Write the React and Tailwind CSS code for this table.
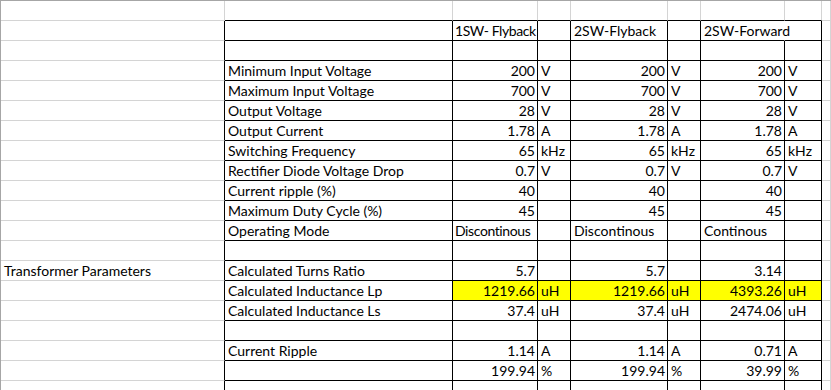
const rows = [
  { top: true },
  { head: ['1SW- Flyback', '2SW-Flyback', '2SW-Forward'], title: true },
  {},
  { b: 'Minimum Input Voltage', v: [['200', 'V'], ['200', 'V'], ['200', 'V']] },
  { b: 'Maximum Input Voltage', v: [['700', 'V'], ['700', 'V'], ['700', 'V']] },
  { b: 'Output Voltage', v: [['28', 'V'], ['28', 'V'], ['28', 'V']] },
  { b: 'Output Current', v: [['1.78', 'A'], ['1.78', 'A'], ['1.78', 'A']] },
  { b: 'Switching Frequency', v: [['65', 'kHz'], ['65', 'kHz'], ['65', 'kHz']] },
  { b: 'Rectifier Diode Voltage Drop', v: [['0.7', 'V'], ['0.7', 'V'], ['0.7', 'V']] },
  { b: 'Current ripple (%)', v: [['40', ''], ['40', ''], ['40', '']] },
  { b: 'Maximum Duty Cycle (%)', v: [['45', ''], ['45', ''], ['45', '']] },
  { b: 'Operating Mode', head: ['Discontinous', 'Discontinous', 'Continous'] },
  {},
  { a: 'Transformer Parameters', b: 'Calculated Turns Ratio', v: [['5.7', ''], ['5.7', ''], ['3.14', '']] },
  { b: 'Calculated Inductance Lp', v: [['1219.66', 'uH'], ['1219.66', 'uH'], ['4393.26', 'uH']], yellow: true },
  { b: 'Calculated Inductance Ls', v: [['37.4', 'uH'], ['37.4', 'uH'], ['2474.06', 'uH']] },
  {},
  { b: 'Current Ripple', v: [['1.14', 'A'], ['1.14', 'A'], ['0.71', 'A']] },
  { v: [['199.94', '%'], ['199.94', '%'], ['39.99', '%']] },
  {},
];

const Cell = ({ children, right, bottom, align = 'left', bg = '', spill, tight }) => (
  <div
    className={`h-full flex items-end whitespace-nowrap border-r border-b pb-[2px] ${
      spill ? 'overflow-visible' : 'overflow-hidden'
    } ${tight ? 'tracking-[-0.4px] pl-[2px]' : align === 'right' ? 'justify-end pr-[2px]' : 'justify-start pl-[3px]'} ${right} ${bottom} ${bg}`}
  >
    {children}
  </div>
);

export default function App() {
  return (
    <div
      className="w-[831px] h-[390px] overflow-hidden bg-white border-l border-t border-[#a6a6a6] text-[14px] leading-none text-black"
      style={{ fontFamily: 'Lato, "Liberation Sans", sans-serif' }}
    >
      {rows.map((r, i) => {
        const top = !!r.top;
        const cells = [];
        for (let c = 0; c < 9; c++) {
          let right = 'border-r-[#d4d4d4]';
          let bottom = 'border-b-[#d4d4d4]';
          let spill = c === 0;
          if (!top && c <= 7) right = 'border-r-black';
          if (c >= 1 && c <= 7) bottom = 'border-b-black';
          if (r.title && c === 6) {
            right = 'border-r-white';
            spill = true;
          }
          const bg = r.yellow && c >= 2 && c <= 7 ? 'bg-[#ffff00]' : '';
          let content = null;
          let align = 'left';
          let tight = false;
          if (c === 0) content = r.a;
          if (c === 1) content = r.b;
          if (c >= 2 && c <= 7) {
            const k = Math.floor((c - 2) / 2);
            const isVal = c % 2 === 0;
            if (r.head) {
              content = isVal ? r.head[k] : null;
              tight = isVal && k === 0;
            } else if (r.v) {
              content = isVal ? r.v[k][0] : r.v[k][1];
              align = isVal ? 'right' : 'left';
            }
          }
          cells.push(
            <Cell key={c} right={right} bottom={bottom} align={align} bg={bg} spill={spill} tight={tight}>
              {content}
            </Cell>
          );
        }
        return (
          <div
            key={i}
            className="grid grid-cols-[224px_228px_85px_33px_97px_33px_84px_37px_1fr] h-[20px]"
          >
            {cells}
          </div>
        );
      })}
    </div>
  );
}
